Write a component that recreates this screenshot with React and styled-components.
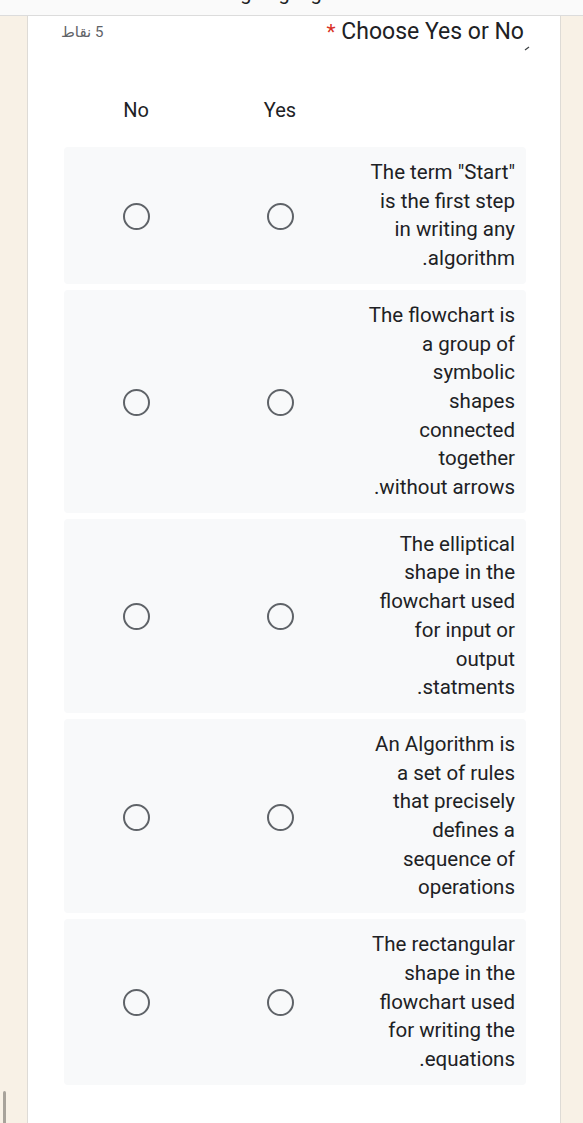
import React from "react";
import styled, { createGlobalStyle } from "styled-components";

const GlobalStyle = createGlobalStyle`
  html, body {
    margin: 0;
    padding: 0;
    background: #f8f1e6;
  }
  * {
    box-sizing: border-box;
  }
`;

const statements = [
  'The term "Start" is the first step in writing any algorithm.',
  "The flowchart is a group of symbolic shapes connected together without arrows.",
  "The elliptical shape in the flowchart used for input or output statments.",
  "An Algorithm is a set of rules that precisely defines a sequence of operations",
  "The rectangular shape in the flowchart used for writing the equations.",
];

export default function App() {
  return (
    <StyledPage>
      <GlobalStyle />
      <StyledTopStrip>
        <span>designing algorithm</span>
      </StyledTopStrip>
      <StyledCard>
        <StyledHeader>
          <StyledPoints dir="rtl">5 نقاط</StyledPoints>
          <StyledTitleBlock>
            <StyledTitle>
              <StyledStar>*</StyledStar> Choose Yes or No
            </StyledTitle>
            <svg width="6" height="6" viewBox="0 0 6 6">
              <path d="M1 5 L5 2" stroke="#3c4043" strokeWidth="1.2" />
            </svg>
          </StyledTitleBlock>
        </StyledHeader>

        <StyledGrid>
          <StyledColumnHead>No</StyledColumnHead>
          <StyledColumnHead>Yes</StyledColumnHead>
          <span />
        </StyledGrid>

        <StyledRows>
          {statements.map((text, index) => (
            <StyledRow key={index}>
              <StyledCell>
                <StyledRadio />
              </StyledCell>
              <StyledCell>
                <StyledRadio />
              </StyledCell>
              <StyledStatement dir="rtl">{text}</StyledStatement>
            </StyledRow>
          ))}
        </StyledRows>
      </StyledCard>
      <StyledScrollMark />
    </StyledPage>
  );
}

const StyledPage = styled.div`
  min-height: 1123px;
  background: #f8f1e6;
  font-family: Roboto, "Noto Sans", "DejaVu Sans", sans-serif;
  color: #202124;
  display: flex;
  flex-direction: column;
`;

const StyledTopStrip = styled.div`
  height: 16px;
  overflow: hidden;
  background: #fafafa;
  border-bottom: 1.5px solid #dcdcdc;
  display: flex;
  justify-content: center;

  span {
    font-size: 20px;
    line-height: 20px;
    margin-top: -17px;
    color: #202124;
  }
`;

const StyledCard = styled.section`
  flex: 1;
  margin: 0 22px 0 27px;
  background: #ffffff;
  border-left: 1.5px solid #dedbd6;
  border-right: 1.5px solid #dedbd6;
  padding: 1px 34px 40px 36px;
`;

const StyledHeader = styled.div`
  display: flex;
  justify-content: space-between;
  align-items: flex-start;
  margin: 0 2px 0 -3px;
`;

const StyledPoints = styled.span`
  font-size: 15px;
  line-height: 30px;
  color: #5f6368;
`;

const StyledTitleBlock = styled.div`
  display: flex;
  flex-direction: column;
  align-items: flex-end;

  svg {
    margin-right: -6px;
    margin-top: -2px;
  }
`;

const StyledTitle = styled.h2`
  margin: 0;
  font-size: 23px;
  font-weight: 400;
  line-height: 30px;
  color: #202124;
`;

const StyledStar = styled.span`
  color: #d93025;
  font-size: 21px;
`;

const StyledGrid = styled.div`
  display: grid;
  grid-template-columns: 144px 144px 1fr;
  margin-top: 46px;
`;

const StyledColumnHead = styled.span`
  text-align: center;
  font-size: 20px;
  line-height: 26px;
  color: #202124;
`;

const StyledRows = styled.div`
  display: flex;
  flex-direction: column;
  gap: 6px;
  margin-top: 24px;
`;

const StyledRow = styled.div`
  display: grid;
  grid-template-columns: 144px 144px 1fr;
  align-items: center;
  background: #f8f9fa;
  border-radius: 4px;
`;

const StyledCell = styled.div`
  display: flex;
  justify-content: center;
  align-items: center;
`;

const StyledRadio = styled.span`
  width: 27px;
  height: 27px;
  border-radius: 50%;
  border: 2.5px solid #5f6368;
  margin-top: 2px;
`;

const StyledStatement = styled.p`
  margin: 0;
  padding: 11px 11px 11px 14px;
  font-size: 20.5px;
  line-height: 28.7px;
  text-align: right;
  color: #202124;
`;

const StyledScrollMark = styled.div`
  position: fixed;
  left: 3px;
  bottom: 0;
  width: 3px;
  height: 32px;
  background: #a8a39b;
  border-radius: 2px 2px 0 0;
`;
